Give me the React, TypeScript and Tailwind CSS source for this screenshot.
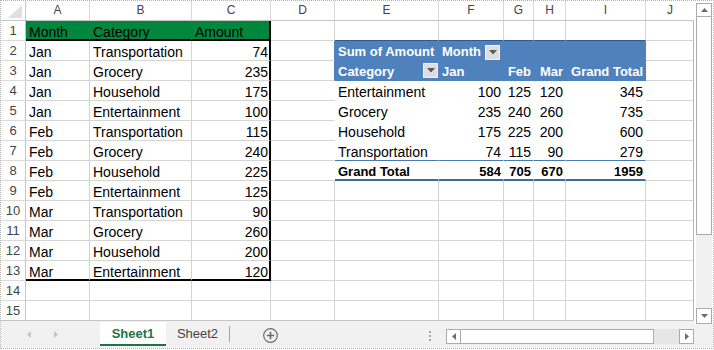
import React from "react";

type Cell = {
  text?: string;
  right?: boolean;
  bold?: boolean;
  bg: string;
  color: string;
  br: string;
  bb: string;
  pr: string;
  dd?: "E" | "F";
};

const COLS = [
  { key: "A", w: "w-[64px]" },
  { key: "B", w: "w-[102px]" },
  { key: "C", w: "w-[79px]" },
  { key: "D", w: "w-[64px]" },
  { key: "E", w: "w-[104px]" },
  { key: "F", w: "w-[65px]" },
  { key: "G", w: "w-[30px]" },
  { key: "H", w: "w-[32px]" },
  { key: "I", w: "w-[80px]" },
  { key: "J", w: "w-[48px]" },
];

const SOURCE: [string, string, number][] = [
  ["Jan", "Transportation", 74],
  ["Jan", "Grocery", 235],
  ["Jan", "Household", 175],
  ["Jan", "Entertainment", 100],
  ["Feb", "Transportation", 115],
  ["Feb", "Grocery", 240],
  ["Feb", "Household", 225],
  ["Feb", "Entertainment", 125],
  ["Mar", "Transportation", 90],
  ["Mar", "Grocery", 260],
  ["Mar", "Household", 200],
  ["Mar", "Entertainment", 120],
];

const PIVOT: (string | number)[][] = [
  ["Entertainment", 100, 125, 120, 345],
  ["Grocery", 235, 240, 260, 735],
  ["Household", 175, 225, 200, 600],
  ["Transportation", 74, 115, 90, 279],
  ["Grand Total", 584, 705, 670, 1959],
];

const BR_GRID = "border-r border-r-[#d4d4d4]";
const BB_GRID = "border-b border-b-[#d4d4d4]";

function cellFor(r: number, c: number): Cell {
  const cell: Cell = { bg: "bg-white", color: "text-black", br: BR_GRID, bb: BB_GRID, pr: "pr-[2px]" };
  if (c === 9) cell.br = "border-r border-r-[#b4b4b4]";
  if (r === 15) cell.bb = "border-b border-b-[#c6c6c6]";

  // source table A1:C13
  if (c <= 2 && r <= 13) {
    if (r === 1) {
      cell.bg = "bg-[#00873d]";
      cell.text = ["Month", "Category", "Amount"][c];
      cell.bb = "border-b-2 border-b-black";
      if (c < 2) cell.br = "border-r border-r-[#00873d]";
    } else {
      const row = SOURCE[r - 2];
      cell.text = String(row[c]);
      if (c === 2) cell.right = true;
    }
    if (r === 13) cell.bb = "border-b-2 border-b-black";
    if (c === 2) {
      cell.br = "border-r-2 border-r-black";
      cell.pr = "pr-[1px]";
    }
  }

  // pivot table E2:I8
  const inPivot = c >= 4 && c <= 8;
  if (r === 1 && inPivot) cell.bb = "border-b border-b-[#2f5b8f]";
  if (r === 2 || r === 3) {
    if (c === 3) cell.br = "border-r border-r-[#4f81bd]";
    if (inPivot) {
      cell.bg = "bg-[#4f81bd]";
      cell.color = "text-white";
      cell.bold = true;
      cell.br = "border-r border-r-[#4f81bd]";
      cell.bb = "border-b border-b-[#4f81bd]";
      if (r === 2) {
        if (c === 4) cell.text = "Sum of Amount";
        if (c === 5) {
          cell.text = "Month";
          cell.dd = "F";
          cell.pr = "pr-[3px]";
        }
      } else {
        if (c === 4) {
          cell.text = "Category";
          cell.dd = "E";
          cell.pr = "pr-0";
        }
        if (c === 5) cell.text = "Jan";
        if (c >= 6) {
          cell.text = ["Feb", "Mar", "Grand Total"][c - 6];
          cell.right = true;
        }
      }
    }
  }
  if (r >= 4 && r <= 8) {
    if (c === 3) cell.br = "border-r border-r-white";
    if (inPivot) {
      cell.br = "border-r border-r-white";
      cell.bb =
        r === 7
          ? "border-b border-b-[#4a7ab5]"
          : r === 8
            ? "border-b-2 border-b-[#3d6aa5]"
            : "border-b border-b-white";
      cell.text = String(PIVOT[r - 4][c - 4]);
      cell.right = c > 4;
      cell.bold = r === 8;
    }
  }
  return cell;
}

const Dropdown = ({ top }: { top: string }) => (
  <div
    className={`ml-auto ${top} w-[15px] h-[15px] shrink-0 bg-[#dedede] border border-[#f2f2f2] flex items-center justify-center`}
  >
    <svg width="8" height="5" viewBox="0 0 8 5">
      <path d="M0 0 H8 L4 4.5 Z" fill="#595959" />
    </svg>
  </div>
);

const Tri = ({ dir, color }: { dir: "up" | "down" | "left" | "right"; color: string }) => {
  const d = {
    up: "M0 4 L3.5 0 L7 4 Z",
    down: "M0 0 H7 L3.5 4 Z",
    left: "M4 0 V7 L0 3.5 Z",
    right: "M0 0 V7 L4 3.5 Z",
  }[dir];
  const vertical = dir === "up" || dir === "down";
  return (
    <svg width={vertical ? 7 : 4} height={vertical ? 4 : 7} viewBox={vertical ? "0 0 7 4" : "0 0 4 7"}>
      <path d={d} fill={color} />
    </svg>
  );
};

export default function App() {
  const rows = Array.from({ length: 15 }, (_, i) => i + 1);

  return (
    <div className="w-[714px] h-[349px] bg-white border border-dotted border-[#b0b0b0] flex overflow-hidden font-['Liberation_Sans',Arial,sans-serif]">
      <div className="w-[693px] shrink-0 flex flex-col">
        {/* column header */}
        <div className="flex h-[20px]">
          <div className="w-[25px] h-full shrink-0 border-r border-r-[#c6c6c6] border-b border-b-[#c6c6c6] flex items-end justify-end pb-[2px] pr-[3px]">
            <svg width="14" height="13" viewBox="0 0 14 13">
              <path d="M14 0 V13 H0 Z" fill="#dfdfdf" />
            </svg>
          </div>
          {COLS.map((col) => (
            <div
              key={col.key}
              className={`${col.w} h-full shrink-0 border-b border-b-[#c6c6c6] ${
                col.key === "J" ? "" : "border-r border-r-[#dadada]"
              } text-center text-[12px] leading-[19px] text-[#444]`}
            >
              {col.key}
            </div>
          ))}
        </div>

        {/* rows */}
        {rows.map((r) => (
          <div key={r} className="flex h-[20px]">
            <div
              className={`w-[25px] h-full shrink-0 border-r border-r-[#c6c6c6] ${
                r === 15 ? "border-b border-b-[#c6c6c6]" : "border-b border-b-[#dadada]"
              } text-center text-[13px] leading-[19px] text-[#444]`}
            >
              {r}
            </div>
            {COLS.map((col, c) => {
              const cell = cellFor(r, c);
              return (
                <div
                  key={col.key}
                  className={`${col.w} h-full shrink-0 flex items-start ${cell.right ? "justify-end" : ""} pl-[3px] ${
                    cell.pr
                  } pt-[2px] leading-[18px] whitespace-nowrap ${
                    cell.bold ? "text-[13px] font-bold" : "text-[14px]"
                  } ${cell.bg} ${cell.color} ${cell.br} ${cell.bb}`}
                >
                  {cell.text && <span>{cell.text}</span>}
                  {cell.dd === "F" && <Dropdown top="mt-[2px]" />}
                  {cell.dd === "E" && <Dropdown top="mt-0" />}
                </div>
              );
            })}
          </div>
        ))}

        {/* sheet tabs */}
        <div className="h-[27px] bg-[#f1f1f1] flex items-start text-[13px]">
          <div className="w-[99px] h-[27px] flex items-center pl-[26px] gap-[23px]">
            <Tri dir="left" color="#c4c4c4" />
            <Tri dir="right" color="#c4c4c4" />
          </div>
          <div className="w-[66px] h-[24px] mt-px bg-white border-b-2 border-b-[#217346] text-center pt-[2px] leading-[20px] font-bold text-[#217346]">
            Sheet1
          </div>
          <div className="w-[63px] h-[24px] mt-px text-center pt-[2px] leading-[20px] text-[#444]">Sheet2</div>
          <div className="w-px h-[16px] mt-[5px] bg-[#a6a6a6]" />
          <div className="ml-[33px] mt-[7px] w-[15px] h-[15px]">
            <svg width="15" height="15" viewBox="0 0 15 15">
              <circle cx="7.5" cy="7.5" r="6.8" fill="none" stroke="#6a6a6a" strokeWidth="1.2" />
              <path d="M7.5 3.8 V11.2 M3.8 7.5 H11.2" stroke="#6a6a6a" strokeWidth="1.6" />
            </svg>
          </div>
          <div className="flex-1" />
          <div className="mt-[10px] w-[3px] flex flex-col gap-[2px]">
            <div className="w-[2px] h-[2px] bg-[#a8a8a8]" />
            <div className="w-[2px] h-[2px] bg-[#a8a8a8]" />
            <div className="w-[2px] h-[2px] bg-[#a8a8a8]" />
          </div>
          <div className="ml-[14px] mt-[8px] w-[248px] h-[15px] flex">
            <div className="w-[15px] h-full border border-[#ababab] bg-white flex items-center justify-center">
              <Tri dir="left" color="#6d6d6d" />
            </div>
            <div className="w-[194px] h-full -ml-px border border-[#ababab] bg-white" />
            <div className="flex-1 h-full bg-[#e6e6e6]" />
            <div className="w-[15px] h-full border border-[#ababab] bg-white flex items-center justify-center">
              <Tri dir="right" color="#6d6d6d" />
            </div>
          </div>
        </div>
      </div>

      {/* vertical scrollbar */}
      <div className="w-[19px] shrink-0 flex flex-col">
        <div className="h-[323px] pl-[2px] pr-[1px] pt-[2px] flex flex-col">
          <div className="flex-1 flex flex-col bg-[#f0f0f0]">
            <div className="h-[14px] border border-[#ababab] bg-white flex items-center justify-center">
              <Tri dir="up" color="#6d6d6d" />
            </div>
            <div className="h-[219px] -mt-px border border-[#ababab] bg-white" />
            <div className="flex-1" />
            <div className="h-[16px] border border-[#ababab] bg-white flex items-center justify-center">
              <Tri dir="down" color="#6d6d6d" />
            </div>
          </div>
        </div>
        <div className="flex-1 bg-[#f1f1f1]" />
      </div>
    </div>
  );
}
